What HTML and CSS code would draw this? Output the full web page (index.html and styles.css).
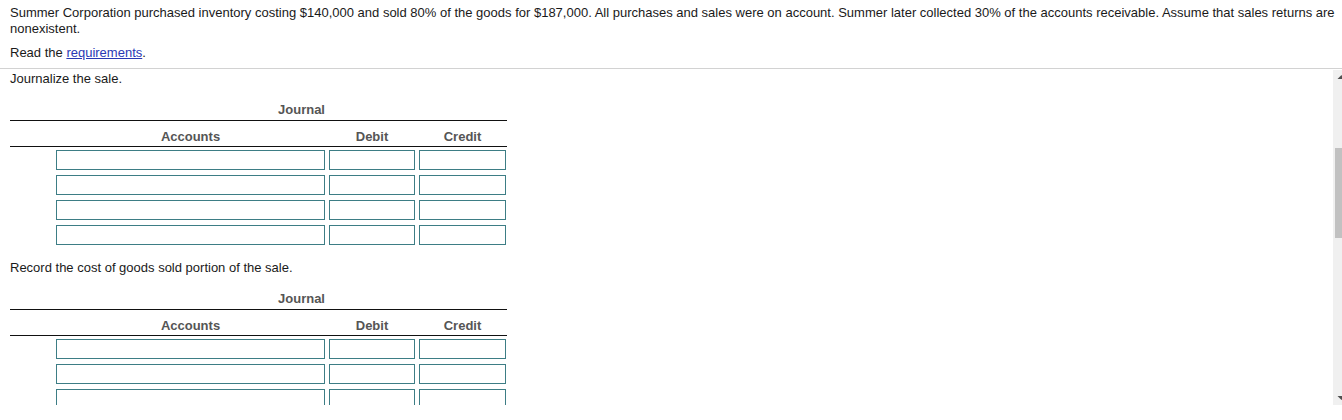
FILE: index.html
```html
<!DOCTYPE html>
<html lang="en">
<head>
<meta charset="utf-8">
<title>Journal</title>
<link rel="stylesheet" href="styles.css">
</head>
<body>
<div class="question">
  <p class="q">Summer Corporation purchased inventory costing $140,000 and sold 80% of the goods for $187,000. All purchases and sales were on account. Summer later collected 30% of the accounts receivable. Assume that sales returns are nonexistent.</p>
  <p class="read">Read the <a class="link" href="#">requirements</a>.</p>
</div>
<div class="pane">
  <div class="content">
    <p class="prompt first">Journalize the sale.</p>
    <div class="journal">
      <div class="j-title">Journal</div>
      <div class="j-grid j-head"><span></span><span>Accounts</span><span>Debit</span><span>Credit</span></div>
      <div class="j-rows">
        <div class="j-grid"><span></span><input class="cell"><input class="cell"><input class="cell"></div>
        <div class="j-grid"><span></span><input class="cell"><input class="cell"><input class="cell"></div>
        <div class="j-grid"><span></span><input class="cell"><input class="cell"><input class="cell"></div>
        <div class="j-grid"><span></span><input class="cell"><input class="cell"><input class="cell"></div>
      </div>
    </div>
    <p class="prompt">Record the cost of goods sold portion of the sale.</p>
    <div class="journal">
      <div class="j-title">Journal</div>
      <div class="j-grid j-head"><span></span><span>Accounts</span><span>Debit</span><span>Credit</span></div>
      <div class="j-rows">
        <div class="j-grid"><span></span><input class="cell"><input class="cell"><input class="cell"></div>
        <div class="j-grid"><span></span><input class="cell"><input class="cell"><input class="cell"></div>
        <div class="j-grid"><span></span><input class="cell"><input class="cell"><input class="cell"></div>
        <div class="j-grid"><span></span><input class="cell"><input class="cell"><input class="cell"></div>
      </div>
    </div>
  </div>
  <div class="scrollbar">
    <svg class="arrow" width="9" height="12" viewBox="0 0 9 12"><polygon points="8.5,5 4.5,9 12.5,9" fill="#505050"/></svg>
    <div class="thumb"></div>
    <div class="track-rest"></div>
    <svg class="arrow" width="9" height="12" viewBox="0 0 9 12"><polygon points="4.5,3 12.5,3 8.5,7" fill="#505050"/></svg>
  </div>
</div>
</body>
</html>
```
FILE: styles.css
```css
html, body {
  margin: 0;
  padding: 0;
  background: #ffffff;
}
body {
  width: 1342px;
  height: 420px;
  overflow: hidden;
  font-family: "Liberation Sans", Arial, sans-serif;
  font-size: 13px;
  line-height: 16px;
  color: #1a1a1a;
}
.question {
  padding: 5px 4px 0 10px;
}
.q {
  margin: 0;
}
.read {
  margin: 8px 0 0;
}
.link {
  color: #2a38b4;
  text-decoration: underline;
}
.pane {
  margin-top: 7px;
  border-top: 1px solid #d2d2d2;
  height: 336px;
  display: flex;
  overflow: hidden;
}
.content {
  flex: 1;
  padding-left: 10px;
  overflow: hidden;
}
.prompt {
  margin: 15px 0 0;
}
.prompt.first {
  margin-top: 0;
  padding-top: 2px;
}
.journal {
  width: 497px;
}
.j-title {
  margin-top: 15px;
  padding: 0 0 2px 86px;
  text-align: center;
  font-weight: bold;
  color: #555555;
}
.j-grid {
  display: grid;
  grid-template-columns: 42px 269px 86px 87px;
  column-gap: 4px;
}
.j-head {
  border-top: 1px solid #111111;
  border-bottom: 1px solid #111111;
  padding: 8px 0 1px;
  font-weight: bold;
  color: #555555;
  text-align: center;
}
.j-rows {
  margin-top: 3px;
  display: flex;
  flex-direction: column;
  gap: 5px;
}
.cell {
  box-sizing: border-box;
  height: 20px;
  margin: 0;
  padding: 0;
  border: 1px solid #3d7d85;
  background: #ffffff;
  outline: none;
}
.scrollbar {
  width: 9px;
  margin-top: 1px;
  background: #f0f0f0;
  display: flex;
  flex-direction: column;
}
.arrow {
  display: block;
  flex: none;
}
.thumb {
  margin: 66px 0 0 2px;
  height: 90px;
  background: #c1c1c1;
  flex: none;
}
.track-rest {
  flex: 1;
}
```
